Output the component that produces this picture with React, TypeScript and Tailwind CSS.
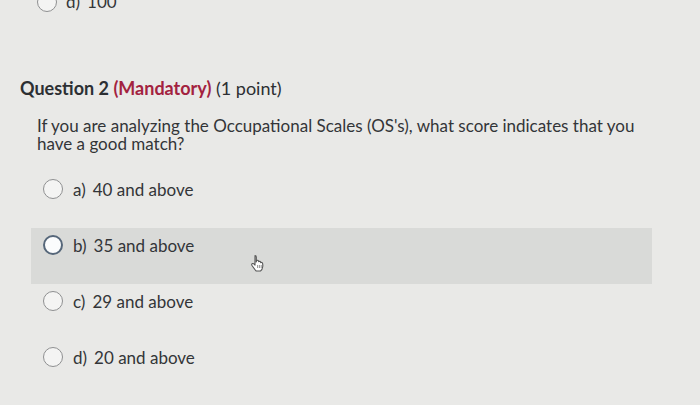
import React from "react";

const options = [
  { key: "a", label: "40 and above" },
  { key: "b", label: "35 and above", hover: true },
  { key: "c", label: "29 and above" },
  { key: "d", label: "20 and above" },
];

function Radio({ active }: { active?: boolean }) {
  return (
    <span
      className={
        active
          ? "block w-[20px] h-[20px] -mt-[1px] rounded-full border-[2.5px] border-[#56677a] bg-[#fbfcfd] shrink-0"
          : "block w-[20px] h-[20px] -mt-[1px] rounded-full border-[1.5px] border-[#8f9091] bg-[#f4f4f3] shrink-0"
      }
    />
  );
}

function HandCursor() {
  return (
    <svg width="16" height="18" viewBox="0 0 16 18" className="absolute left-[250px] top-[254px]">
      <path
        d="M5 1.5c.8 0 1.3.6 1.3 1.4V8l.2-1.3c.6-.6 1.6-.5 2 .3l.2.7c.6-.5 1.6-.4 1.9.4l.1.5c.6-.4 1.5-.2 1.8.5.3.8.4 2 .2 3.6-.3 2.2-1 3.6-2.2 4.3H6.2C5 15.9 3.6 13.8 2 11.5c-.5-.8-.3-1.6.4-1.9.6-.3 1.3 0 1.8.6l.8.9V2.9c0-.8.2-1.4 0-1.4z"
        fill="#ffffff"
        stroke="#555"
        strokeWidth="1.1"
        strokeLinejoin="round"
      />
      <path d="M7.6 11v3M9.4 11v3M11.2 11v3" stroke="#777" strokeWidth="0.8" />
    </svg>
  );
}

export default function App() {
  return (
    <div
      className="relative w-[700px] h-[405px] overflow-hidden bg-[#e9e9e7] text-[#333538]"
      style={{ fontFamily: "Lato, 'Open Sans', sans-serif" }}
    >
      {/* tail of the previous question, scrolled mostly out of view */}
      <div className="flex items-center gap-[9px] pl-[37px] -mt-[8px] h-[20px] text-[17px]">
        <Radio />
        <span>
          d)<span className="ml-[7px]">100</span>
        </span>
      </div>

      <h2 className="mt-[65px] pl-[20px] text-[18px] leading-[22px] text-[#2c2f33]">
        <span className="font-bold">Question 2 </span>
        <span className="font-bold text-[#a3223f]">(Mandatory)</span>
        <span> (1 point)</span>
      </h2>

      <p className="mt-[18px] pl-[37px] w-[640px] text-[17px] leading-[18px] text-[#333538]">
        If you are analyzing the Occupational Scales (OS's), what score indicates that you have a good match?
      </p>

      <ul className="mt-[19px] mx-[31px] w-[621px]">
        {options.map((o) => (
          <li
            key={o.key}
            className={
              o.hover
                ? "flex items-start gap-[10px] h-[56px] pl-[12px] pt-[8px] bg-[#d9dad8]"
                : "flex items-start gap-[10px] h-[56px] pl-[12px] pt-[8px]"
            }
          >
            <Radio active={o.hover} />
            <span className="flex gap-[7px] text-[17px] leading-[20px] text-[#333538]">
              <span>{o.key})</span>
              <span>{o.label}</span>
            </span>
          </li>
        ))}
      </ul>

      <HandCursor />
    </div>
  );
}
